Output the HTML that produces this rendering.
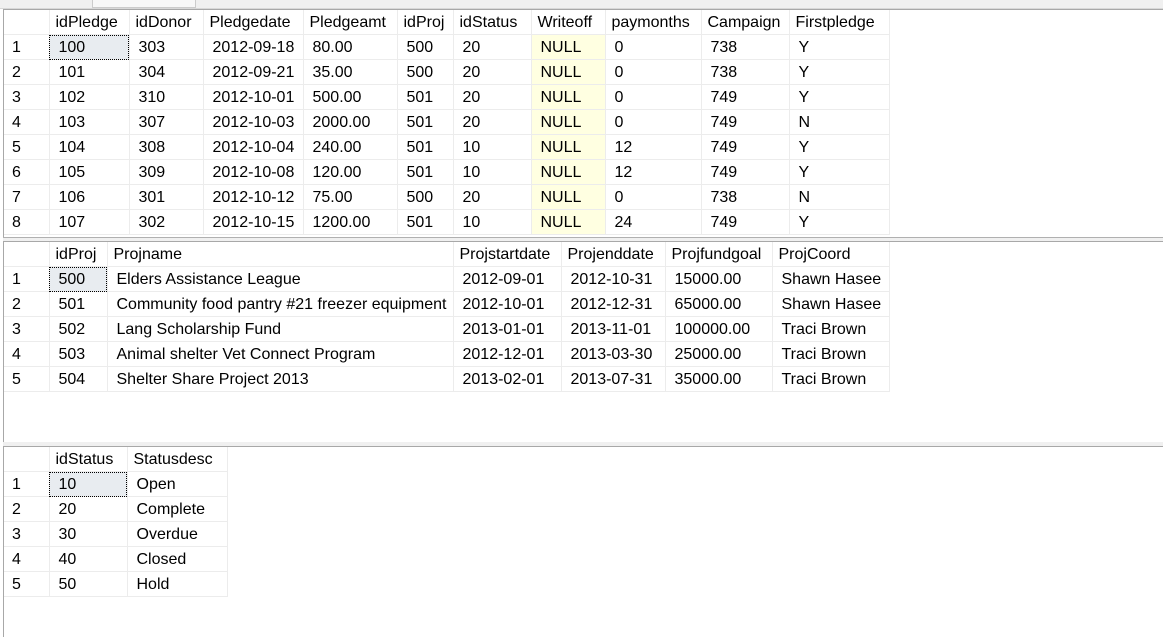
<!DOCTYPE html><html><head><style>
body{margin:0;width:1163px;height:636px;background:#fff;position:relative;overflow:hidden;font-family:"Liberation Sans",Arial,sans-serif;font-size:16px;color:#000}
.tab{position:absolute;top:0;left:0;width:1163px;height:8px;background:#f0f0f0;border-bottom:1px solid #d8d8d8}
.tab .t{position:absolute;left:92px;top:-1px;width:102px;height:8px;background:#f8f8f8;border:1px solid #ccc;border-top:none}
.pane{position:absolute;left:3px;width:1160px;border-left:1px solid #a8a8a8;border-top:1px solid #a8a8a8;background:#fff}
.sep{position:absolute;left:3px;width:1160px;background:#f0f0f0}
table{border-collapse:collapse;table-layout:fixed;position:absolute;left:0;top:0}
td{height:23px;border:1px solid #ececec;padding:1px 0 0 9px;white-space:nowrap;overflow:hidden;line-height:23px;box-sizing:content-box}
tr.h td{padding-left:6px}
td.n{padding-left:8px;border-left:none}
td.y{background:#ffffe1}
td.s{background:#e8ecf0;outline:1px dotted #000;outline-offset:-1px}
tr.h td{border-top:none}
</style></head><body>
<div class="tab"><div class="t"></div></div>
<div class="pane" style="top:9px;height:227px">
<table style="width:885px">
<colgroup><col style="width:45px"><col style="width:80px"><col style="width:74px"><col style="width:100px"><col style="width:94px"><col style="width:56px"><col style="width:78px"><col style="width:74px"><col style="width:96px"><col style="width:88px"><col style="width:100px"></colgroup>
<tr class="h"><td class="n"></td><td>idPledge</td><td>idDonor</td><td>Pledgedate</td><td>Pledgeamt</td><td>idProj</td><td>idStatus</td><td>Writeoff</td><td>paymonths</td><td>Campaign</td><td>Firstpledge</td></tr>
<tr><td class="n">1</td><td class="s">100</td><td>303</td><td>2012-09-18</td><td>80.00</td><td>500</td><td>20</td><td class="y">NULL</td><td>0</td><td>738</td><td>Y</td></tr>
<tr><td class="n">2</td><td>101</td><td>304</td><td>2012-09-21</td><td>35.00</td><td>500</td><td>20</td><td class="y">NULL</td><td>0</td><td>738</td><td>Y</td></tr>
<tr><td class="n">3</td><td>102</td><td>310</td><td>2012-10-01</td><td>500.00</td><td>501</td><td>20</td><td class="y">NULL</td><td>0</td><td>749</td><td>Y</td></tr>
<tr><td class="n">4</td><td>103</td><td>307</td><td>2012-10-03</td><td>2000.00</td><td>501</td><td>20</td><td class="y">NULL</td><td>0</td><td>749</td><td>N</td></tr>
<tr><td class="n">5</td><td>104</td><td>308</td><td>2012-10-04</td><td>240.00</td><td>501</td><td>10</td><td class="y">NULL</td><td>12</td><td>749</td><td>Y</td></tr>
<tr><td class="n">6</td><td>105</td><td>309</td><td>2012-10-08</td><td>120.00</td><td>501</td><td>10</td><td class="y">NULL</td><td>12</td><td>749</td><td>Y</td></tr>
<tr><td class="n">7</td><td>106</td><td>301</td><td>2012-10-12</td><td>75.00</td><td>500</td><td>20</td><td class="y">NULL</td><td>0</td><td>738</td><td>N</td></tr>
<tr><td class="n">8</td><td>107</td><td>302</td><td>2012-10-15</td><td>1200.00</td><td>501</td><td>10</td><td class="y">NULL</td><td>24</td><td>749</td><td>Y</td></tr>
</table></div>
<div class="sep" style="top:237px;height:4px;border-top:1px solid #b0b0b0"></div>
<div class="pane" style="top:241px;height:200px;border-bottom:1px solid #a8a8a8">
<table style="width:885px">
<colgroup><col style="width:45px"><col style="width:58px"><col style="width:346px"><col style="width:108px"><col style="width:104px"><col style="width:107px"><col style="width:117px"></colgroup>
<tr class="h"><td class="n"></td><td>idProj</td><td>Projname</td><td>Projstartdate</td><td>Projenddate</td><td>Projfundgoal</td><td>ProjCoord</td></tr>
<tr><td class="n">1</td><td class="s">500</td><td>Elders Assistance League</td><td>2012-09-01</td><td>2012-10-31</td><td>15000.00</td><td>Shawn Hasee</td></tr>
<tr><td class="n">2</td><td>501</td><td>Community food pantry #21 freezer equipment</td><td>2012-10-01</td><td>2012-12-31</td><td>65000.00</td><td>Shawn Hasee</td></tr>
<tr><td class="n">3</td><td>502</td><td>Lang Scholarship Fund</td><td>2013-01-01</td><td>2013-11-01</td><td>100000.00</td><td>Traci Brown</td></tr>
<tr><td class="n">4</td><td>503</td><td>Animal shelter Vet Connect Program</td><td>2012-12-01</td><td>2013-03-30</td><td>25000.00</td><td>Traci Brown</td></tr>
<tr><td class="n">5</td><td>504</td><td>Shelter Share Project 2013</td><td>2013-02-01</td><td>2013-07-31</td><td>35000.00</td><td>Traci Brown</td></tr>
</table></div>
<div class="sep" style="top:442px;height:4px"></div>
<div class="pane" style="top:446px;height:190px">
<table style="width:223px">
<colgroup><col style="width:45px"><col style="width:78px"><col style="width:100px"></colgroup>
<tr class="h"><td class="n"></td><td>idStatus</td><td>Statusdesc</td></tr>
<tr><td class="n">1</td><td class="s">10</td><td>Open</td></tr>
<tr><td class="n">2</td><td>20</td><td>Complete</td></tr>
<tr><td class="n">3</td><td>30</td><td>Overdue</td></tr>
<tr><td class="n">4</td><td>40</td><td>Closed</td></tr>
<tr><td class="n">5</td><td>50</td><td>Hold</td></tr>
</table></div>
</body></html>
